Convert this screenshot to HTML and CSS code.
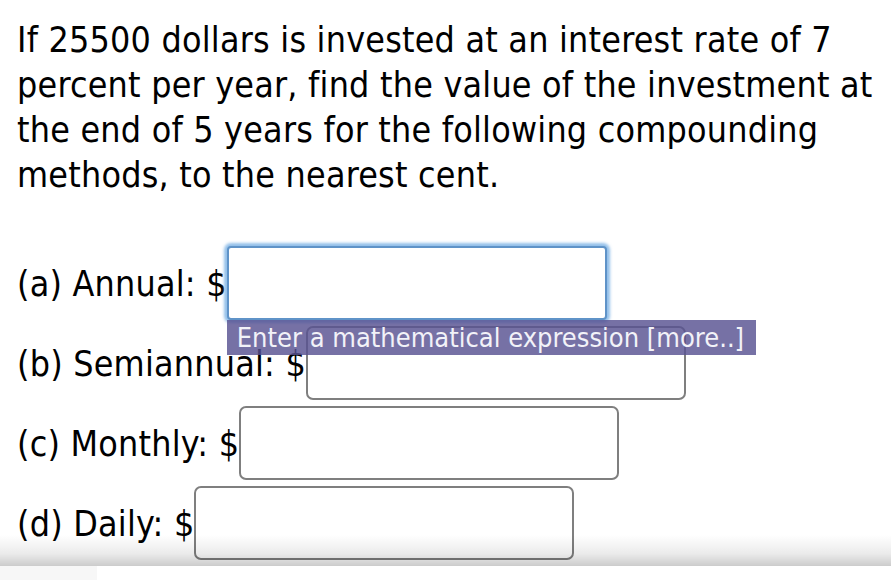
FILE: index.html
```html
<!DOCTYPE html>
<html>
<head>
<meta charset="utf-8">
<link rel="stylesheet" href="styles.css">
</head>
<body>
<div class="page">
  <p class="question">If 25500 dollars is invested at an interest rate of 7 percent per year, find the value of the investment at the end of 5 years for the following compounding methods, to the nearest cent.</p>
  <div class="answers">
    <div class="row">
      <span class="label">(a) Annual: $</span>
      <span class="field-wrap">
        <span class="field focused"></span>
        <span class="tip">Enter a mathematical expression [more..]</span>
      </span>
    </div>
    <div class="row">
      <span class="label">(b) Semiannual: $</span>
      <span class="field"></span>
    </div>
    <div class="row">
      <span class="label">(c) Monthly: $</span>
      <span class="field"></span>
    </div>
    <div class="row">
      <span class="label">(d) Daily: $</span>
      <span class="field"></span>
    </div>
  </div>
</div>
<div class="bottom-shade"></div>
<div class="bottom-strip"><span class="patch"></span></div>
</body>
</html>
```
FILE: styles.css
```css
html, body {
  margin: 0;
  padding: 0;
  background: #ffffff;
}
body {
  font-family: "DejaVu Sans Condensed", "DejaVu Sans", sans-serif;
  color: #000;
  width: 891px;
  height: 580px;
  overflow: hidden;
  position: relative;
}
.page {
  padding: 17px 0 0 17px;
}
.question {
  margin: 0;
  width: 872px;
  font-size: 35.5px;
  letter-spacing: 0.22px;
  line-height: 45px;
}
.answers {
  margin-top: 49px;
  display: flex;
  flex-direction: column;
  gap: 6px;
}
.row {
  display: flex;
  align-items: center;
  font-size: 35.5px;
  letter-spacing: 0.22px;
  height: 74px;
}
.label {
  white-space: pre;
}
.field-wrap {
  position: relative;
  display: flex;
}
.field {
  display: block;
  width: 376px;
  height: 70px;
  border: 2px solid #7f7f7f;
  border-radius: 7px;
  background: transparent;
}
.field.focused {
  border: 2px solid #5f93c8;
  border-radius: 4px;
  box-shadow: 0 0 3px 3px rgba(110, 170, 225, 0.75);
  background: #fff;
}
.tip {
  position: absolute;
  left: 0;
  top: 74px;
  height: 35px;
  line-height: 35px;
  padding: 0 12px 0 10px;
  white-space: nowrap;
  font-size: 27px;
  letter-spacing: 0;
  color: #f2f2f8;
  background: rgba(88, 82, 145, 0.82);
  z-index: 5;
}
.bottom-shade {
  position: absolute;
  left: 0;
  top: 535px;
  width: 891px;
  height: 31px;
  background: linear-gradient(to bottom, rgba(0,0,0,0) 0%, rgba(0,0,0,0.08) 60%, rgba(0,0,0,0.2) 100%);
  pointer-events: none;
}
.bottom-strip {
  position: absolute;
  left: 0;
  top: 566px;
  width: 891px;
  height: 14px;
  background: #ffffff;
}
.patch {
  display: block;
  width: 97px;
  height: 14px;
  background: #f7f7f7;
}
```
